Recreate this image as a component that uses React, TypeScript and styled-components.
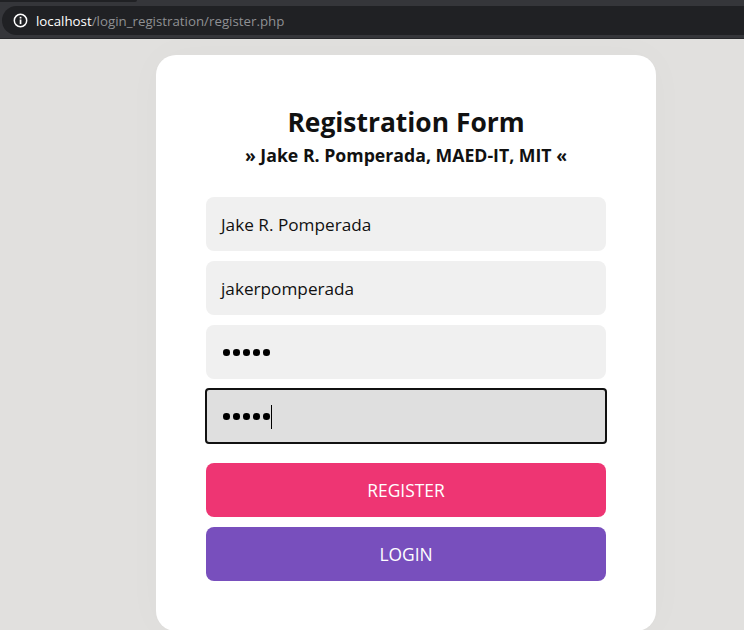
import React from "react";
import styled, { createGlobalStyle } from "styled-components";

const Global = createGlobalStyle`
  html, body { margin: 0; padding: 0; height: 630px; overflow: hidden; background: #e1e0de; }
  * { box-sizing: border-box; }
  body { font-family: "Open Sans", sans-serif; }
`;

const Toolbar = styled.div`
  height: 39px;
  background: #35363a;
  padding: 6px 0 3px 2px;
  border-bottom: 1px solid #27282b;
  position: relative;
  overflow: hidden;
`;

const TabEdge = styled.div`
  position: absolute;
  top: 0;
  left: 0;
  width: 137px;
  height: 2px;
  background: #202124;
  border-radius: 0 0 3px 0;
`;

const UrlPill = styled.div`
  height: 29px;
  background: #202124;
  border-radius: 15px 0 0 15px;
  display: flex;
  align-items: center;
  gap: 8px;
  padding-left: 11px;
  font-size: 13.3px;
`;

const UrlText = styled.div`
  color: #8f9093;
  white-space: nowrap;
  b { color: #fff; font-weight: 400; }
`;

const Page = styled.main`
  display: flex;
  justify-content: flex-start;
  padding: 16px 0 0 156px;
`;

const Card = styled.section`
  width: 500px;
  height: 576px;
  flex: none;
  background: #fff;
  border-radius: 20px;
  padding: 50px 50px 0;
  box-shadow: 0 0 40px rgba(0, 0, 0, 0.025);
  text-align: center;
`;

const Title = styled.h1`
  margin: 0;
  font-size: 26.4px;
  line-height: 34px;
  font-weight: 700;
  color: #111;
`;

const Subtitle = styled.h2`
  margin: 4px 0 0;
  font-size: 17.7px;
  line-height: 24px;
  font-weight: 700;
  color: #111;
`;

const Form = styled.form`
  display: flex;
  flex-direction: column;
  gap: 10px;
  margin-top: 29.6px;
`;

const Field = styled.div<{ $focused?: boolean }>`
  height: 54px;
  border-radius: ${(p) => (p.$focused ? "3px" : "8px")};
  background: ${(p) => (p.$focused ? "#dfdfdf" : "#f0f0f0")};
  outline: ${(p) => (p.$focused ? "2px solid #111" : "none")};
  outline-offset: -1px;
  padding: 2px 0 0 15px;
  display: flex;
  align-items: center;
  font-size: 17.2px;
  color: #111;
  text-align: left;
`;

const Dots = styled.span`
  display: flex;
  gap: 3.4px;
  align-items: center;
  margin-left: 2px;
`;

const Dot = styled.i`
  width: 6.6px;
  height: 6.6px;
  border-radius: 50%;
  background: #000;
  display: block;
`;

const Caret = styled.i`
  width: 1px;
  height: 24px;
  background: #000;
  margin-left: 1px;
  display: block;
`;

const Button = styled.button<{ $bg: string }>`
  height: 54px;
  border: none;
  border-radius: 8px;
  background: ${(p) => p.$bg};
  color: #fff;
  font-family: "Open Sans", sans-serif;
  font-size: 17.4px;
  padding: 0;
`;

const FirstButton = styled(Button)`
  margin-top: 10px;
`;

const password = [0, 1, 2, 3, 4];

export default function App() {
  return (
    <>
      <Global />
      <Toolbar>
        <TabEdge />
        <UrlPill>
          <svg width="15" height="15" viewBox="0 0 15 15" fill="none">
            <circle cx="7.5" cy="7.5" r="6.2" stroke="#fff" strokeWidth="1.5" />
            <rect x="6.7" y="6.5" width="1.7" height="4.6" fill="#fff" />
            <rect x="6.7" y="3.8" width="1.7" height="1.7" fill="#fff" />
          </svg>
          <UrlText>
            <b>localhost</b>/login_registration/register.php
          </UrlText>
        </UrlPill>
      </Toolbar>
      <Page>
        <Card>
          <Title>Registration Form</Title>
          <Subtitle>» Jake R. Pomperada, MAED-IT, MIT «</Subtitle>
          <Form>
            <Field>Jake R. Pomperada</Field>
            <Field>jakerpomperada</Field>
            <Field>
              <Dots>
                {password.map((d) => (
                  <Dot key={d} />
                ))}
              </Dots>
            </Field>
            <Field $focused>
              <Dots>
                {password.map((d) => (
                  <Dot key={d} />
                ))}
              </Dots>
              <Caret />
            </Field>
            <FirstButton type="button" $bg="#ee3573">
              REGISTER
            </FirstButton>
            <Button type="button" $bg="#784fbd">
              LOGIN
            </Button>
          </Form>
        </Card>
      </Page>
    </>
  );
}
